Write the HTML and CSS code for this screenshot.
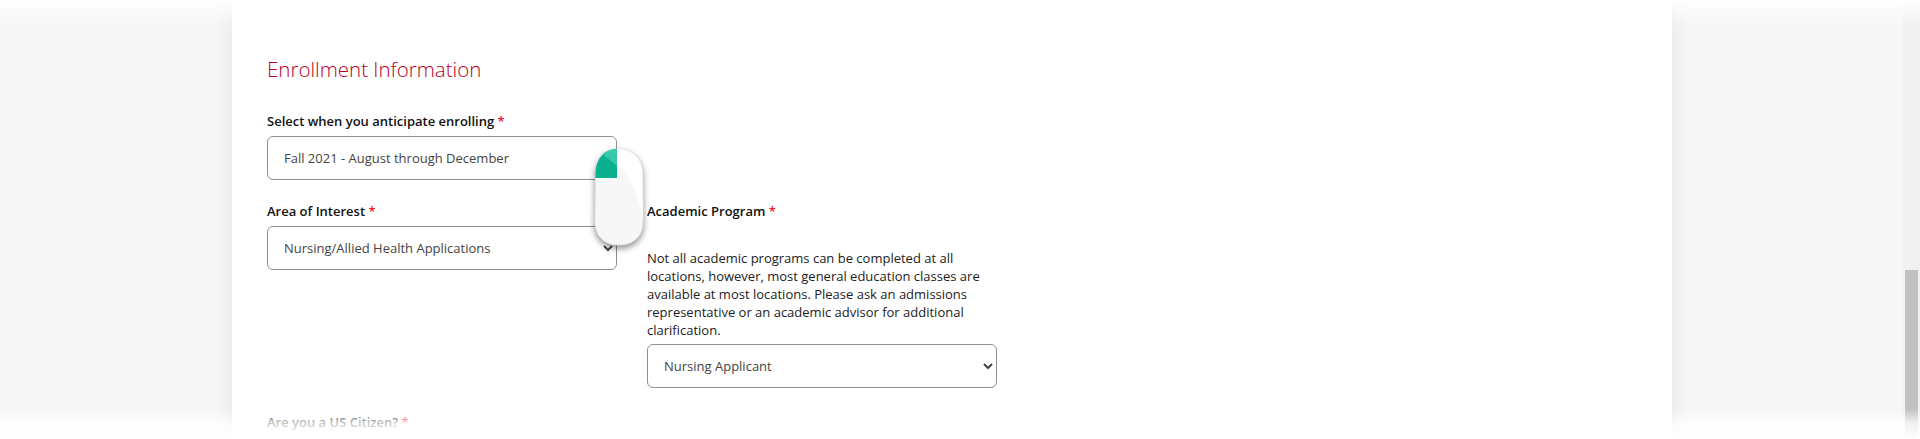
FILE: index.html
```html
<!DOCTYPE html>
<html lang="en">
<head>
<meta charset="utf-8">
<title>Enrollment Information</title>
<link rel="stylesheet" href="styles.css">
</head>
<body>
<div class="page">
  <main class="card">
    <h2 class="section-title">Enrollment Information</h2>
    <form class="form-grid">
      <div class="field field-wide">
        <label class="label">Select when you anticipate enrolling <span class="req">*</span></label>
        <select class="select"><option>Fall 2021 - August through December</option></select>
      </div>
      <div class="field">
        <label class="label">Area of Interest <span class="req">*</span></label>
        <select class="select"><option>Nursing/Allied Health Applications</option></select>
      </div>
      <div class="field">
        <label class="label">Academic Program <span class="req">*</span></label>
        <p class="help">Not all academic programs can be completed at all locations, however, most general education classes are available at most locations. Please ask an admissions representative or an academic advisor for additional clarification.</p>
        <select class="select"><option>Nursing Applicant</option></select>
      </div>
      <div class="field field-wide field-next">
        <label class="label label-last">Are you a US Citizen? <span class="req">*</span></label>
      </div>
    </form>
  </main>
  <div class="scrollbar"><div class="thumb"></div></div>
</div>
<div class="fade fade-top"></div>
<div class="fade fade-bottom"></div>
<svg class="mouse" viewBox="0 0 48 97" width="48" height="97" aria-hidden="true">
  <path class="mouse-body" d="M24 0C37 0 47 9 47.500 24L48 72C48 88 38 96 24 96C10 96 0 88 0 72L0.500 24C1 9 11 0 24 0Z"/>
  <path class="mouse-sheen" d="M22 0C36 0 47 9 47.500 24L48 72C44 46 36 28 22 14Z"/>
  <path class="mouse-btn" d="M22 0V29H0.400V24C1 9 10 0 22 0Z"/>
  <path class="mouse-btn-light" d="M22 0V17L7.500 5C11.500 2 16.500 0 22 0Z"/>
</svg>
</body>
</html>
```
FILE: styles.css
```css
* { box-sizing: border-box; }
html, body { margin: 0; height: 100%; overflow: hidden; }
body { background: #f6f6f6; font-family: "Open Sans", "Liberation Sans", sans-serif; color: #222; }
.page { display: flex; height: 439px; }
.card {
  flex: none;
  width: 1440px;
  height: 439px;
  margin-left: 232px;
  margin-right: 231px;
  padding: 55px 35px 0;
  background: #fff;
  box-shadow: 0 0 20px rgba(0, 0, 0, .08);
}
.section-title {
  margin: 0 0 29px;
  font-size: 20.500px;
  font-weight: 300;
  line-height: 28px;
  color: #b8001f;
}
.form-grid { display: grid; grid-template-columns: 350px 350px; column-gap: 30px; row-gap: 0; align-items: start; }
.field-wide { grid-column: 1 / -1; }
.field { margin-bottom: 22px; }
.field-next { margin-top: 3px; margin-bottom: 0; }
.label { display: block; margin-bottom: 6px; font-size: 13px; font-weight: 600; line-height: 18px; color: #111; }
.label-last { margin-bottom: 0; }
.req { color: #f0142f; }
.help { margin: 29px 0 5px; font-size: 13px; line-height: 18px; color: #222; }
.select {
  display: block;
  width: 350px;
  height: 44px;
  padding: 0 12px;
  border: 1px solid #8f8f8f;
  border-radius: 6px;
  background-color: #fff;
  font-family: inherit;
  font-size: 13px;
  color: #444;
}
.scrollbar { flex: none; width: 17px; background: #f1f1f1; padding: 270px 2px 0; }
.thumb { height: 169px; background: #c1c1c1; }
.fade { position: absolute; left: 0; right: 0; pointer-events: none; }
.fade-top { top: 0; height: 28px; background: linear-gradient(to bottom, rgba(255,255,255,.9), rgba(255,255,255,0)); }
.fade-bottom { bottom: 0; height: 30px; background: linear-gradient(to top, #fff, rgba(255,255,255,.75) 55%, rgba(255,255,255,0)); }
.mouse { position: absolute; left: 595px; top: 149px; overflow: visible; filter: drop-shadow(0 3px 3px rgba(0,0,0,.45)); }
.mouse-body { fill: #f7f7f7; stroke: #e4e4e4; stroke-width: 1; }
.mouse-sheen { fill: #fff; }
.mouse-btn { fill: #0bb08f; }
.mouse-btn-light { fill: #36c9a8; }
```
